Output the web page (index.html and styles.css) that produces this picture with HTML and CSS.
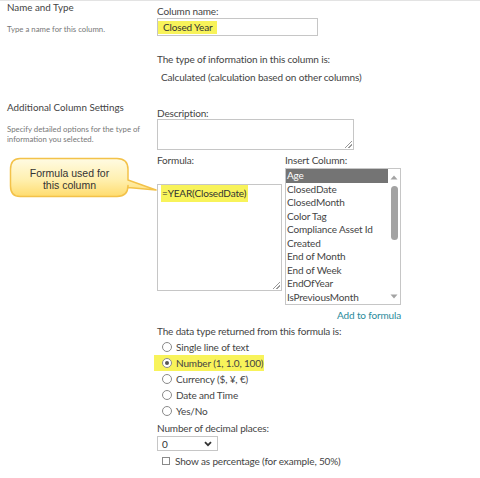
FILE: index.html
```html
<!DOCTYPE html>
<html>
<head>
<meta charset="utf-8">
<link rel="stylesheet" href="styles.css">
</head>
<body>
<div class="page">
  <section class="row row-name">
    <div class="left">
      <h3 class="sec-title">Name and Type</h3>
      <p class="sec-desc">Type a name for this column.</p>
    </div>
    <div class="right">
      <div class="label">Column name:</div>
      <div class="input"><span class="hl">Closed Year</span></div>
      <div class="type-label">The type of information in this column is:</div>
      <div class="type-value">Calculated (calculation based on other columns)</div>
    </div>
  </section>

  <section class="row row-settings">
    <div class="left">
      <h3 class="sec-title">Additional Column Settings</h3>
      <p class="sec-desc">Specify detailed options for the type of information you selected.</p>
    </div>
    <div class="right">
      <div class="label label-desc">Description:</div>
      <div class="textarea desc-box"><span class="grip"></span></div>

      <div class="formula-row">
        <div class="formula-col">
          <div class="label">Formula:</div>
          <div class="textarea formula-box"><span class="hl hl-formula">=YEAR(ClosedDate)</span><span class="grip"></span></div>
        </div>
        <div class="insert-col">
          <div class="label">Insert Column:</div>
          <div class="listbox">
            <ul class="options">
              <li class="selected">Age</li>
              <li>ClosedDate</li>
              <li>ClosedMonth</li>
              <li>Color Tag</li>
              <li>Compliance Asset Id</li>
              <li>Created</li>
              <li>End of Month</li>
              <li>End of Week</li>
              <li>EndOfYear</li>
              <li>IsPreviousMonth</li>
            </ul>
            <div class="scrollbar">
              <svg class="arrow" width="8" height="6" viewBox="0 0 8 6"><path d="M0.5 5.5 L4 1.5 L7.5 5.5 Z" fill="#a3a3a3"/></svg>
              <div class="thumb"></div>
              <svg class="arrow arrow-down" width="8" height="6" viewBox="0 0 8 6"><path d="M0.5 0.5 L4 4.5 L7.5 0.5 Z" fill="#a3a3a3"/></svg>
            </div>
          </div>
          <div class="add-link">Add to formula</div>
        </div>
      </div>

      <div class="label ret-label">The data type returned from this formula is:</div>
      <ul class="radios">
        <li><span class="radio"></span>Single line of text</li>
        <li class="hl-row"><span class="radio checked"></span>Number (1, 1.0, 100)</li>
        <li><span class="radio"></span>Currency ($, ¥, €)</li>
        <li><span class="radio"></span>Date and Time</li>
        <li><span class="radio"></span>Yes/No</li>
      </ul>
      <div class="label dec-label">Number of decimal places:</div>
      <div class="select"><span>0</span><svg width="8" height="6" viewBox="0 0 8 6"><path d="M1 1.2 L4 4.2 L7 1.2" fill="none" stroke="#333" stroke-width="1.8"/></svg></div>
      <div class="check-row"><span class="checkbox"></span>Show as percentage (for example, 50%)</div>
    </div>
  </section>

  <div class="callout">
    <svg class="callout-shape" width="152" height="46" viewBox="0 0 152 46">
      <defs>
        <linearGradient id="cg" x1="0" y1="0" x2="0" y2="1">
          <stop offset="0" stop-color="#fffbe3"/>
          <stop offset="0.55" stop-color="#fff0b0"/>
          <stop offset="1" stop-color="#ffdc6e"/>
        </linearGradient>
      </defs>
      <path d="M11 1.5 H108 Q119 1.5 119 12.5 V23 L147 33 L119 30.5 V28.5 Q119 39.5 108 39.5 H11 Q1.5 39.5 1.5 29 V12.5 Q1.5 1.5 11 1.5 Z" fill="url(#cg)" stroke="#f3c24a" stroke-width="1.5" stroke-linejoin="round"/>
    </svg>
    <div class="callout-text">Formula used for<br>this column</div>
  </div>
</div>
</body>
</html>
```

FILE: styles.css
```css
* { box-sizing: border-box; }
html, body { margin: 0; padding: 0; background: #fff; }
body {
  width: 480px;
  height: 478px;
  overflow: hidden;
  font-family: Lato, "Open Sans", sans-serif;
  color: #444;
}
.page {
  position: relative;
  border-top: 1px solid #e3e3e3;
}
.row { display: flex; }
.left {
  width: 157px;
  padding-left: 7px;
  flex: none;
}
.right {
  flex: 1;
  font-size: 10px;
  letter-spacing: -0.15px;
}

.sec-title {
  margin: 0;
  font-weight: normal;
  font-size: 9.8px;
  line-height: 12px;
  color: #444;
}
.sec-desc {
  margin: 10.5px 0 0;
  font-size: 7.8px;
  line-height: 10.5px;
  color: #777;
  width: 145px;
}

.label {
  line-height: 13px;
  color: #444;
  white-space: nowrap;
}
.row-name .right { padding-top: 4px; }
.input {
  width: 161px;
  height: 18px;
  border: 1px solid #c6c6c6;
  padding: 2px 0 0 0;
  color: #333;
  white-space: nowrap;
}
.hl {
  background: #f8f35a;
  display: inline-block;
}
.input .hl {
  display: block;
  width: 59px;
  height: 13px;
  line-height: 13px;
  padding-left: 5px;
}
.type-label {
  margin-top: 16px;
  line-height: 14px;
}
.type-value {
  margin-top: 4px;
  padding-left: 4px;
  line-height: 14px;
}

.row-settings { margin-top: 17px; }
.row-settings .right { padding-top: 6px; }
.label-desc { line-height: 12px; }
.textarea {
  position: relative;
  border: 1px solid #c6c6c6;
  background: #fff;
}
.desc-box { width: 197px; height: 31px; }
.grip {
  position: absolute;
  right: 1px;
  bottom: 1px;
  width: 7px;
  height: 7px;
  background:
    linear-gradient(135deg, transparent 45%, #999 45%, #999 55%, transparent 55%, transparent 70%, #999 70%, #999 80%, transparent 80%);
}

.formula-row {
  display: flex;
  gap: 3px;
  margin-top: 4px;
}
.formula-col { width: 125px; }
.formula-box {
  margin-top: 17px;
  height: 107px;
  padding: 0 0 0 3px;
  color: #333;
}
.hl-formula {
  height: 17px;
  line-height: 17px;
  padding: 0 2px 0 1px;
}
.insert-col { width: 116px; }
.listbox {
  position: relative;
  margin-top: 1px;
  height: 137px;
  border: 1px solid #c6c6c6;
  display: flex;
}
.options {
  list-style: none;
  margin: 0;
  padding: 0;
  flex: 1;
}
.options li {
  height: 13.5px;
  line-height: 13.5px;
  color: #444;
  padding-left: 1px;
  white-space: nowrap;
}
.options li.selected {
  background: #747474;
  color: #fff;
}
.scrollbar {
  width: 12px;
  flex: none;
  display: flex;
  flex-direction: column;
  align-items: center;
  padding-top: 5px;
}
.arrow { display: block; }
.thumb {
  margin-top: 6px;
  width: 7px;
  height: 54px;
  border-radius: 4px;
  background: #a3a3a3;
}
.arrow-down { margin-top: auto; margin-bottom: 4px; }
.add-link {
  margin-top: 3px;
  text-align: right;
  line-height: 14px;
  color: #2a8a9a;
}

.ret-label { margin-top: 2px; line-height: 14px; }
.radios {
  list-style: none;
  margin: 1px 0 0;
  padding: 0;
}
.radios li {
  display: flex;
  align-items: center;
  height: 16px;
  padding-left: 5px;
  color: #444;
  white-space: nowrap;
}
.radios li.hl-row {
  margin-left: -3px;
  padding-left: 8px;
  width: 110px;
  background: #f8f35a;
}
.radio {
  width: 10px;
  height: 10px;
  border: 1px solid #8a8a8a;
  border-radius: 50%;
  margin-right: 4px;
  flex: none;
  position: relative;
  background: #fff;
}
.radio.checked::after {
  content: "";
  position: absolute;
  left: 2px;
  top: 2px;
  width: 4px;
  height: 4px;
  border-radius: 50%;
  background: #555;
}
.dec-label { margin-top: 2px; line-height: 14px; }
.select {
  margin-top: 1px;
  width: 61px;
  height: 15px;
  border: 1px solid #c6c6c6;
  display: flex;
  align-items: center;
  justify-content: space-between;
  padding: 0 5px 0 4px;
  color: #333;
}
.select svg { display: block; }
.check-row {
  margin-top: 3px;
  display: flex;
  align-items: center;
  height: 14px;
  padding-left: 5px;
  white-space: nowrap;
}
.checkbox {
  width: 8px;
  height: 8px;
  border: 1px solid #8a8a8a;
  margin-right: 5px;
  flex: none;
}

.callout {
  position: absolute;
  left: 9px;
  top: 156px;
  width: 152px;
  height: 46px;
}
.callout-shape { display: block; }
.callout-text {
  position: absolute;
  left: 1px;
  top: 10px;
  width: 119px;
  text-align: center;
  font-family: "Liberation Sans", Arial, sans-serif;
  font-size: 10.5px;
  line-height: 12px;
  color: #333;
}
```
